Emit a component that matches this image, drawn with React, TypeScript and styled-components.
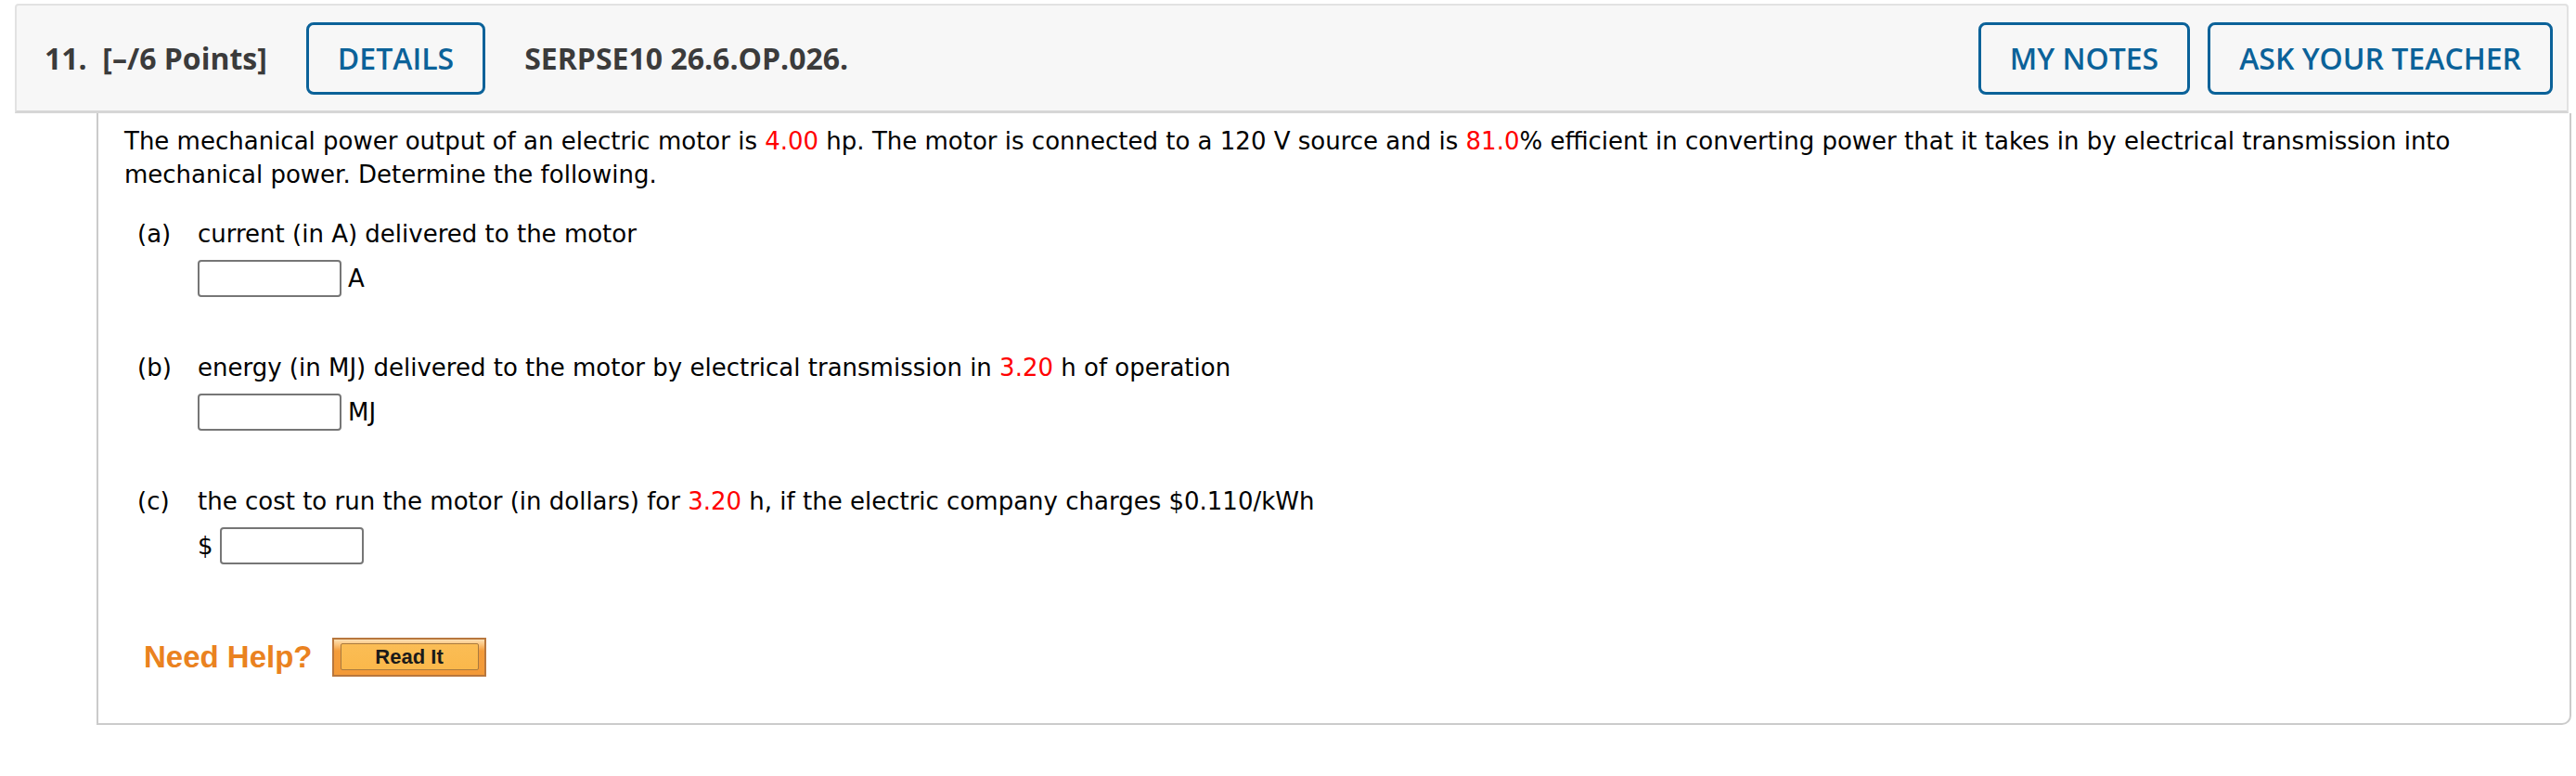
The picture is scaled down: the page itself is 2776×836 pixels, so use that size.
import React from 'react';
import styled, { createGlobalStyle } from 'styled-components';

const GlobalStyle = createGlobalStyle`
  html, body {
    margin: 0;
    padding: 0;
    background: #ffffff;
  }
  * {
    box-sizing: border-box;
  }
`;

type Part = {
  label: string;
  text: React.ReactNode;
  unit?: string;
  prefix?: string;
};

function Val({ children }: { children: React.ReactNode }) {
  return <Red>{children}</Red>;
}

const parts: Part[] = [
  {
    label: '(a)',
    text: 'current (in A) delivered to the motor',
    unit: 'A',
  },
  {
    label: '(b)',
    text: (
      <>
        energy (in MJ) delivered to the motor by electrical transmission in <Val>3.20</Val> h of
        operation
      </>
    ),
    unit: 'MJ',
  },
  {
    label: '(c)',
    text: (
      <>
        the cost to run the motor (in dollars) for <Val>3.20</Val> h, if the electric company
        charges $0.110/kWh
      </>
    ),
    prefix: '$',
  },
];

const App = () => {
  return (
    <Page>
      <GlobalStyle />
      <Header>
        <QuestionNo>11.&nbsp; [–/6 Points]</QuestionNo>
        <HeaderButton>DETAILS</HeaderButton>
        <QuestionId>SERPSE10 26.6.OP.026.</QuestionId>
        <RightGroup>
          <HeaderButton>MY NOTES</HeaderButton>
          <HeaderButton>ASK YOUR TEACHER</HeaderButton>
        </RightGroup>
      </Header>

      <Content>
        <Intro>
          <span>The mechanical power output of an electric motor is </span>
          <Val>4.00</Val>
          <span> hp. The motor is connected to a 120 V source and is </span>
          <Val>81.0</Val>
          <span>% efficient in converting power that it takes in by electrical transmission into</span>{' '}
          <span>mechanical power. Determine the following.</span>
        </Intro>

        <PartList>
          {parts.map((p) => (
            <PartItem key={p.label}>
              <PartLine>
                <PartLabel>{p.label}</PartLabel>
                <PartText>{p.text}</PartText>
              </PartLine>
              <AnswerRow>
                {p.prefix && <Unit>{p.prefix}</Unit>}
                <AnswerInput type="text" />
                {p.unit && <Unit>{p.unit}</Unit>}
              </AnswerRow>
            </PartItem>
          ))}
        </PartList>

        <HelpRow>
          <NeedHelp>Need Help?</NeedHelp>
          <ReadItButton>
            <ReadItFace>Read It</ReadItFace>
          </ReadItButton>
        </HelpRow>
      </Content>
    </Page>
  );
};

const Page = styled.div`
  padding: 4px 0 0 16px;
  width: 2776px;
`;

const Header = styled.div`
  width: 2752px;
  height: 118px;
  display: flex;
  align-items: center;
  gap: 42px;
  padding: 0 15px 0 30px;
  background: #f7f7f7;
  border: 2px solid #e2e2e2;
  border-bottom: 3px solid #d6d6d6;
  border-radius: 4px 4px 0 0;
  font-family: 'Open Sans', 'Liberation Sans', sans-serif;
  font-size: 32px;
  color: #3b3b3b;
`;

const QuestionNo = styled.div`
  font-weight: 700;
  white-space: pre;
`;

const QuestionId = styled.div`
  font-weight: 700;
`;

const RightGroup = styled.div`
  margin-left: auto;
  display: flex;
  gap: 19px;
`;

const HeaderButton = styled.button`
  height: 78px;
  padding: 0 31px;
  border: 3px solid #0b6299;
  border-radius: 8px;
  background: transparent;
  color: #0b6299;
  font-family: 'Open Sans', 'Liberation Sans', sans-serif;
  font-size: 32px;
  font-weight: 600;
  white-space: nowrap;
  cursor: pointer;
`;

const Content = styled.div`
  margin-left: 88px;
  width: 2667px;
  padding: 12px 28px 50px 28px;
  border: 2px solid #cbcbcb;
  border-top: none;
  border-radius: 0 0 10px 0;
  font-family: 'DejaVu Sans', Verdana, sans-serif;
  font-size: 26px;
  line-height: 36px;
  color: #000000;
`;

const Red = styled.span`
  color: #ff0000;
`;

const Intro = styled.p`
  margin: 0 0 28px 0;
`;

const PartList = styled.div`
  display: flex;
  flex-direction: column;
  gap: 58px;
  padding-left: 14px;
`;

const PartItem = styled.div`
  display: flex;
  flex-direction: column;
  gap: 10px;
`;

const PartLine = styled.div`
  display: flex;
`;

const PartLabel = styled.div`
  flex: 0 0 65px;
`;

const PartText = styled.div`
  flex: 1;
`;

const AnswerRow = styled.div`
  display: flex;
  align-items: center;
  gap: 7px;
  padding-left: 65px;
  height: 40px;
`;

const AnswerInput = styled.input`
  width: 155px;
  height: 40px;
  border: 2px solid #767676;
  border-radius: 4px;
  background: #ffffff;
  padding: 0 6px;
  font-family: inherit;
  font-size: 26px;
`;

const Unit = styled.span`
  line-height: 36px;
`;

const HelpRow = styled.div`
  display: flex;
  align-items: center;
  gap: 21px;
  margin-top: 79px;
  padding-left: 21px;
`;

const NeedHelp = styled.span`
  font-family: 'Liberation Sans', Arial, sans-serif;
  font-weight: 700;
  font-size: 33px;
  line-height: 42px;
  color: #ea8220;
`;

const ReadItButton = styled.button`
  display: flex;
  width: 166px;
  height: 42px;
  padding: 4px 6px 5px 7px;
  border: 2px solid #b8773d;
  background: linear-gradient(to bottom, #fde0b3 0%, #fbc57f 14%, #f49c3a 32%, #f39a38 100%);
  cursor: pointer;
`;

const ReadItFace = styled.span`
  flex: 1;
  display: flex;
  align-items: center;
  justify-content: center;
  border: 1px solid #a97a3e;
  border-radius: 2px;
  background: linear-gradient(to bottom, #fbbd55 0%, #fab84b 100%);
  font-family: 'Liberation Sans', Arial, sans-serif;
  font-weight: 700;
  font-size: 22px;
  color: #1a1a1a;
`;

export default App;
